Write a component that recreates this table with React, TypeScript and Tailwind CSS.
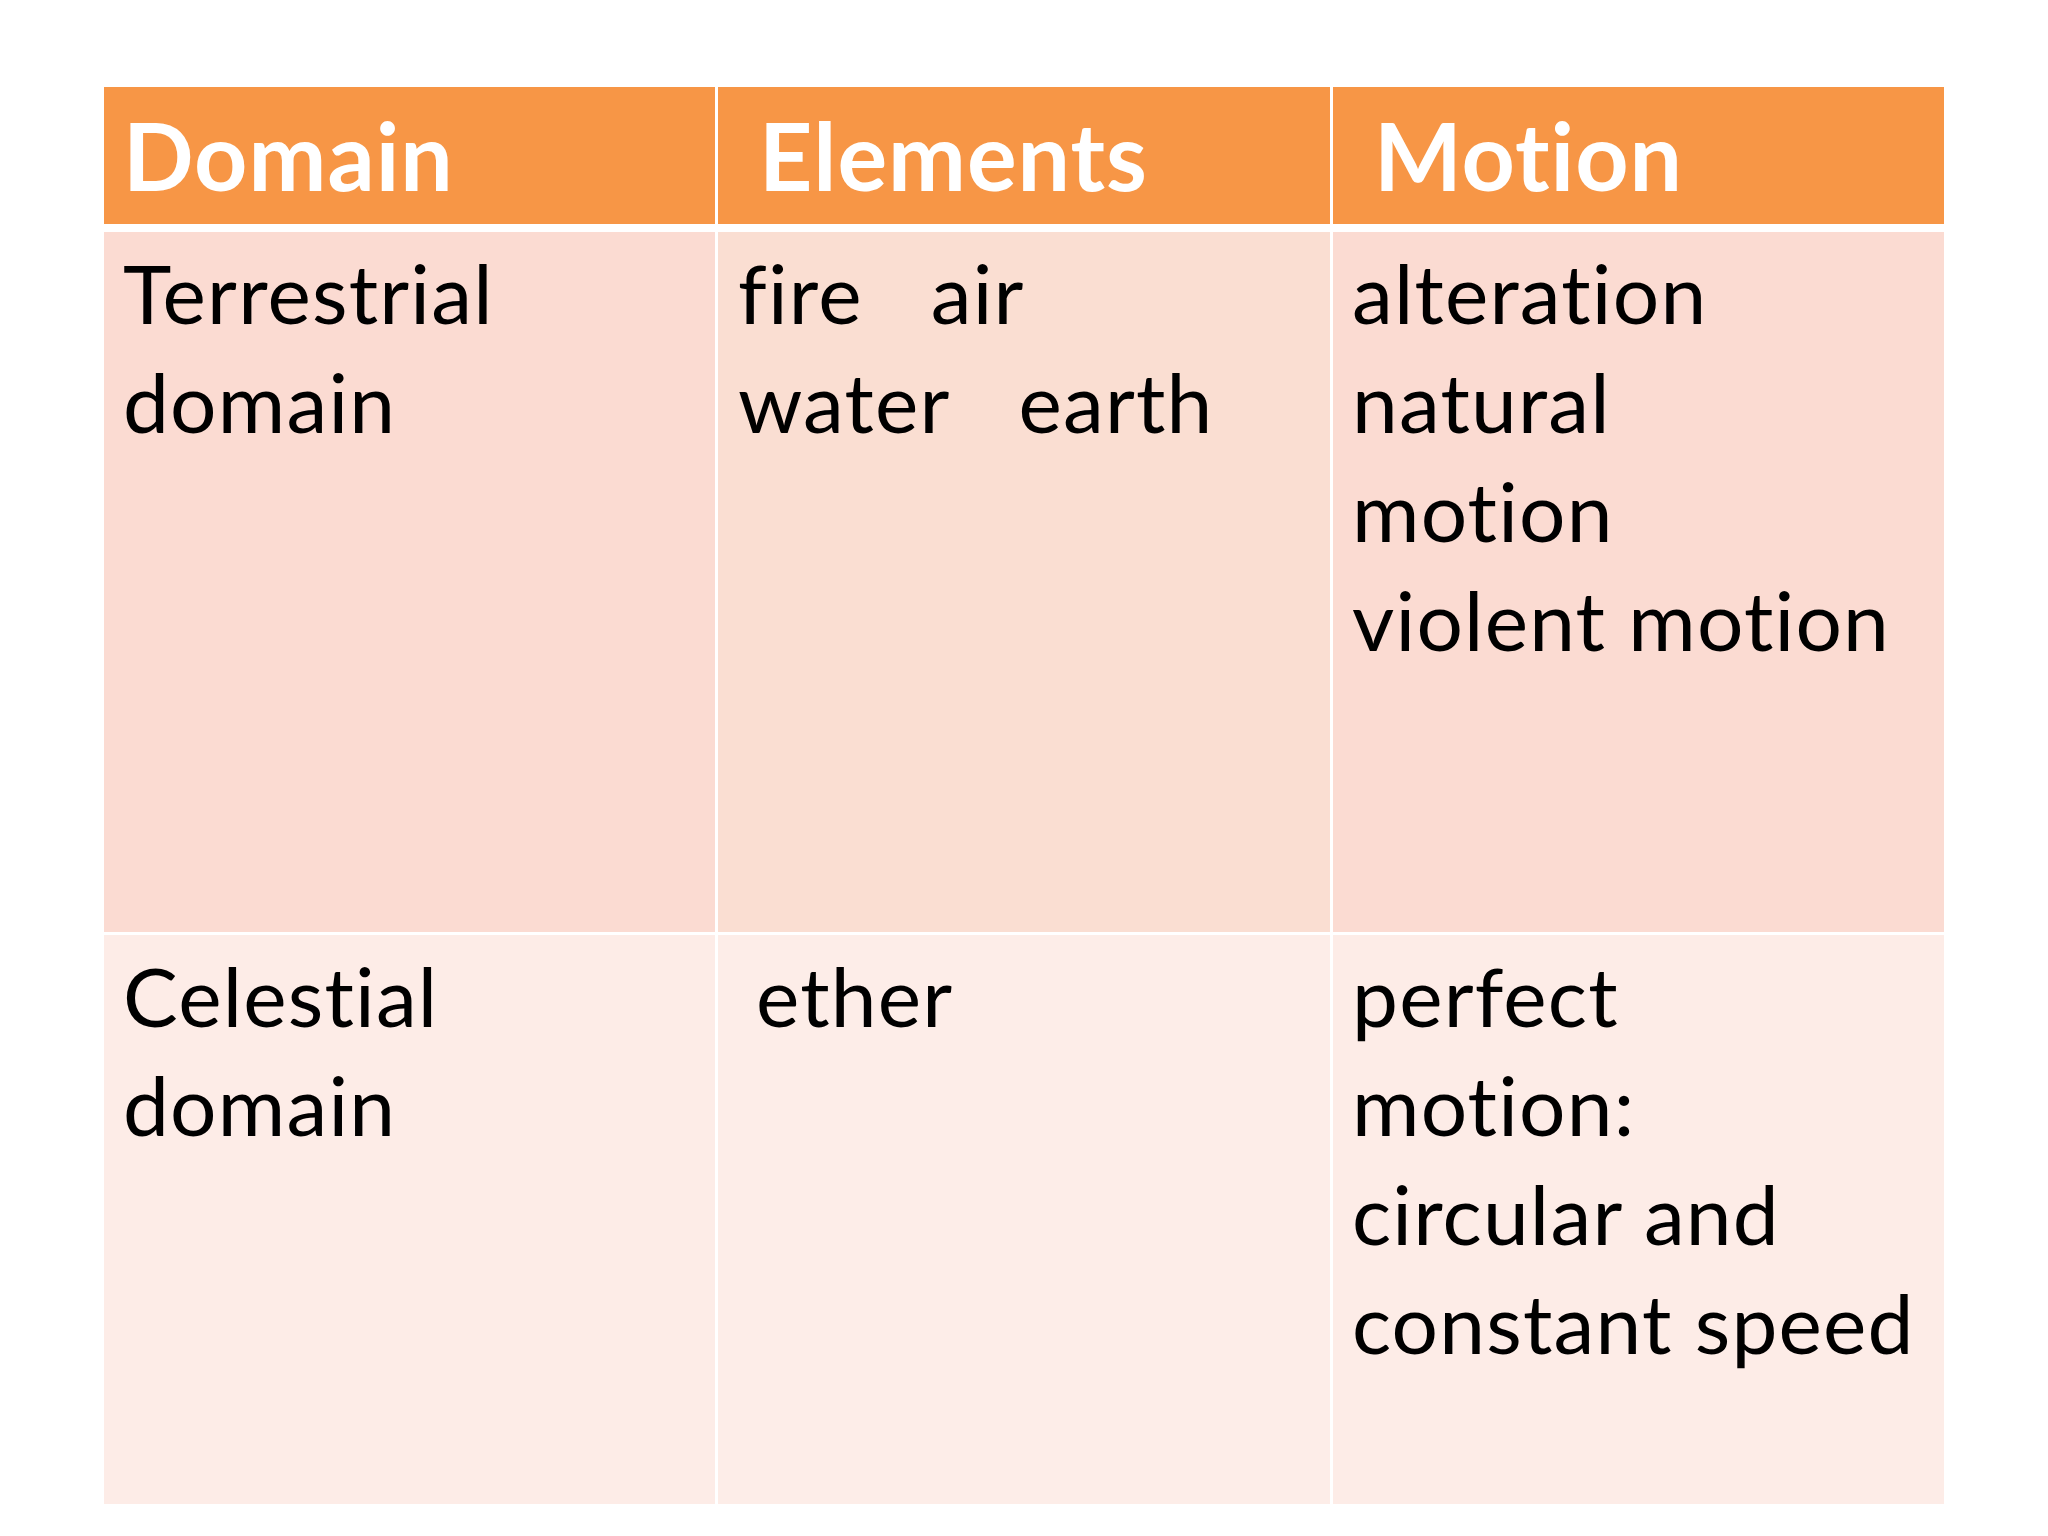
const HEAD =
  "bg-[#F79646] text-white font-bold text-[93px] tracking-[1px] leading-[109px] pt-[14px] [font-variant-ligatures:none]";
const BODY =
  "text-black text-[82px] tracking-[1.2px] leading-[109px] pt-[6px] [font-variant-ligatures:none]";

type Row = {
  height: string;
  bg: string;
  midBg: string;
  domain: string[];
  elements: React.ReactNode;
  elementsPad: string;
  motion: string[];
};

const rows: Row[] = [
  {
    height: "h-[700px]",
    bg: "bg-[#FBDBD2]",
    midBg: "bg-[#FADED2]",
    domain: ["Terrestrial", "domain"],
    elements: (
      <>
        <div>
          fire<span className="ml-[68px]">air</span>
        </div>
        <div>
          water<span className="ml-[68px]">earth</span>
        </div>
      </>
    ),
    elementsPad: "pl-[20px]",
    motion: ["alteration", "natural", "motion", "violent motion"],
  },
  {
    height: "h-[569px]",
    bg: "bg-[#FDECE7]",
    midBg: "bg-[#FDEDE8]",
    domain: ["Celestial", "domain"],
    elements: <div>ether</div>,
    elementsPad: "pl-[38px]",
    motion: ["perfect", "motion:", "circular and", "constant speed"],
  },
];

export default function App() {
  return (
    <div className="min-h-[1536px] w-[2048px] bg-white pt-[87px] pl-[104px] font-['Lato',sans-serif]">
      <div className="flex w-[1840px] flex-col">
        <div className="grid h-[137px] grid-cols-[611px_612px_611px] gap-x-[3px]">
          <div className={`${HEAD} pl-[19px]`}>Domain</div>
          <div className={`${HEAD} pl-[41px]`}>Elements</div>
          <div className={`${HEAD} pl-[41px]`}>Motion</div>
        </div>

        {rows.map((row, i) => (
          <div
            key={row.domain[0]}
            className={`grid grid-cols-[611px_612px_611px] gap-x-[3px] ${row.height} ${i === 0 ? "mt-[8px]" : "mt-[3px]"}`}
          >
            <div className={`${BODY} ${row.bg} pl-[19px]`}>
              {row.domain.map((line) => (
                <div key={line}>{line}</div>
              ))}
            </div>
            <div className={`${BODY} ${row.midBg} ${row.elementsPad}`}>{row.elements}</div>
            <div className={`${BODY} ${row.bg} pl-[19px]`}>
              {row.motion.map((line) => (
                <div key={line} className="whitespace-nowrap">
                  {line}
                </div>
              ))}
            </div>
          </div>
        ))}
      </div>
    </div>
  );
}
